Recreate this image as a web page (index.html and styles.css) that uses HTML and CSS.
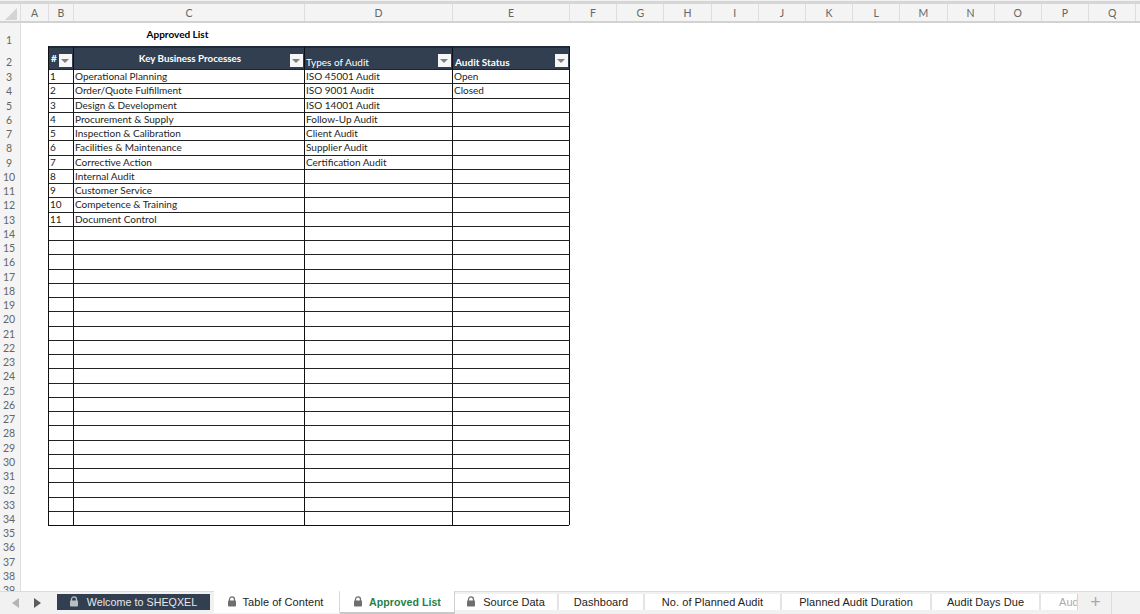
FILE: index.html
```html
<!DOCTYPE html>
<html lang="en">
<head>
<meta charset="utf-8">
<title>Approved List</title>
<link rel="stylesheet" href="styles.css">
</head>
<body>
<div class="app">
  <div class="topline"></div>
  <div class="colhead">
    <div class="corner"><svg width="20" height="19" viewBox="0 0 20 19"><path d="M17 4V16H5Z" fill="#d4d4d4"/></svg></div>
    <div class="ch w28">A</div><div class="ch w25">B</div><div class="ch w231">C</div><div class="ch w148">D</div><div class="ch w117">E</div>
    <div class="ch wn">F</div><div class="ch wn">G</div><div class="ch wn">H</div><div class="ch wn">I</div><div class="ch wn">J</div><div class="ch wn">K</div><div class="ch wn">L</div><div class="ch wn">M</div><div class="ch wn">N</div><div class="ch wn">O</div><div class="ch wn">P</div><div class="ch wn">Q</div>
  </div>
  <div class="main">
    <div class="rowhead">
      <div class="rh r1">1</div><div class="rh r2">2</div>
      <div class="rh">3</div><div class="rh">4</div><div class="rh">5</div><div class="rh">6</div><div class="rh">7</div><div class="rh">8</div><div class="rh">9</div><div class="rh">10</div><div class="rh">11</div><div class="rh">12</div><div class="rh">13</div><div class="rh">14</div><div class="rh">15</div><div class="rh">16</div><div class="rh">17</div><div class="rh">18</div><div class="rh">19</div><div class="rh">20</div><div class="rh">21</div><div class="rh">22</div><div class="rh">23</div><div class="rh">24</div><div class="rh">25</div><div class="rh">26</div><div class="rh">27</div><div class="rh">28</div><div class="rh">29</div><div class="rh">30</div><div class="rh">31</div><div class="rh">32</div><div class="rh">33</div><div class="rh">34</div><div class="rh">35</div><div class="rh">36</div><div class="rh">37</div><div class="rh">38</div><div class="rh">39</div>
    </div>
    <div class="sheet">
      <div class="title">Approved List</div>
      <div class="grid">
        <div class="hd hd-top hd-num">#<span class="fb"></span></div>
        <div class="hd hd-mid">Key Business Processes<span class="fb"></span></div>
        <div class="hd hd-low">Types of Audit<span class="fb"></span></div>
        <div class="hd hd-low hd-strong">Audit Status<span class="fb"></span></div>

        <div class="c">1</div><div class="c">Operational Planning</div><div class="c">ISO 45001 Audit</div><div class="c">Open</div>
        <div class="c">2</div><div class="c">Order/Quote Fulfillment</div><div class="c">ISO 9001 Audit</div><div class="c">Closed</div>
        <div class="c">3</div><div class="c">Design &amp; Development</div><div class="c">ISO 14001 Audit</div><div class="c"></div>
        <div class="c">4</div><div class="c">Procurement &amp; Supply</div><div class="c">Follow-Up Audit</div><div class="c"></div>
        <div class="c">5</div><div class="c">Inspection &amp; Calibration</div><div class="c">Client Audit</div><div class="c"></div>
        <div class="c">6</div><div class="c">Facilities &amp; Maintenance</div><div class="c">Supplier Audit</div><div class="c"></div>
        <div class="c">7</div><div class="c">Corrective Action</div><div class="c">Certification Audit</div><div class="c"></div>
        <div class="c">8</div><div class="c">Internal Audit</div><div class="c"></div><div class="c"></div>
        <div class="c">9</div><div class="c">Customer Service</div><div class="c"></div><div class="c"></div>
        <div class="c">10</div><div class="c">Competence &amp; Training</div><div class="c"></div><div class="c"></div>
        <div class="c">11</div><div class="c">Document Control</div><div class="c"></div><div class="c"></div>
        <div class="c"></div><div class="c"></div><div class="c"></div><div class="c"></div>
        <div class="c"></div><div class="c"></div><div class="c"></div><div class="c"></div>
        <div class="c"></div><div class="c"></div><div class="c"></div><div class="c"></div>
        <div class="c"></div><div class="c"></div><div class="c"></div><div class="c"></div>
        <div class="c"></div><div class="c"></div><div class="c"></div><div class="c"></div>
        <div class="c"></div><div class="c"></div><div class="c"></div><div class="c"></div>
        <div class="c"></div><div class="c"></div><div class="c"></div><div class="c"></div>
        <div class="c"></div><div class="c"></div><div class="c"></div><div class="c"></div>
        <div class="c"></div><div class="c"></div><div class="c"></div><div class="c"></div>
        <div class="c"></div><div class="c"></div><div class="c"></div><div class="c"></div>
        <div class="c"></div><div class="c"></div><div class="c"></div><div class="c"></div>
        <div class="c"></div><div class="c"></div><div class="c"></div><div class="c"></div>
        <div class="c"></div><div class="c"></div><div class="c"></div><div class="c"></div>
        <div class="c"></div><div class="c"></div><div class="c"></div><div class="c"></div>
        <div class="c"></div><div class="c"></div><div class="c"></div><div class="c"></div>
        <div class="c"></div><div class="c"></div><div class="c"></div><div class="c"></div>
        <div class="c"></div><div class="c"></div><div class="c"></div><div class="c"></div>
        <div class="c"></div><div class="c"></div><div class="c"></div><div class="c"></div>
        <div class="c"></div><div class="c"></div><div class="c"></div><div class="c"></div>
        <div class="c"></div><div class="c"></div><div class="c"></div><div class="c"></div>
        <div class="c"></div><div class="c"></div><div class="c"></div><div class="c"></div>
      </div>
    </div>
  </div>
  <div class="tabbar">
    <div class="arrows">
      <svg class="arrow" width="10" height="12" viewBox="0 0 10 12"><path d="M8 1V11L1 6Z" fill="#b4b4b4"/></svg>
      <svg class="arrow" width="10" height="12" viewBox="0 0 10 12"><path d="M2 1V11L9 6Z" fill="#5c5c5c"/></svg>
    </div>
    <div class="tab t-welcome"><svg class="lock" width="10" height="11" viewBox="0 0 10 11"><path d="M2.5 5V3.4a2.5 2.5 0 0 1 5 0V5" fill="none" stroke="#b9bdc4" stroke-width="1.3"/><rect x="1" y="4.6" width="8" height="6" rx=".8" fill="#b9bdc4"/></svg>Welcome to SHEQXEL</div>
    <div class="tab t-toc"><svg class="lock" width="10" height="11" viewBox="0 0 10 11"><path d="M2.5 5V3.4a2.5 2.5 0 0 1 5 0V5" fill="none" stroke="#6e6e6e" stroke-width="1.3"/><rect x="1" y="4.6" width="8" height="6" rx=".8" fill="#6e6e6e"/></svg>Table of Content</div>
    <div class="tab t-active"><svg class="lock" width="10" height="11" viewBox="0 0 10 11"><path d="M2.5 5V3.4a2.5 2.5 0 0 1 5 0V5" fill="none" stroke="#6e6e6e" stroke-width="1.3"/><rect x="1" y="4.6" width="8" height="6" rx=".8" fill="#6e6e6e"/></svg>Approved List</div>
    <div class="tab t-source"><svg class="lock" width="10" height="11" viewBox="0 0 10 11"><path d="M2.5 5V3.4a2.5 2.5 0 0 1 5 0V5" fill="none" stroke="#6e6e6e" stroke-width="1.3"/><rect x="1" y="4.6" width="8" height="6" rx=".8" fill="#6e6e6e"/></svg>Source Data</div>
    <div class="tab t-dash">Dashboard</div>
    <div class="tab t-planned">No. of Planned Audit</div>
    <div class="tab t-duration">Planned Audit Duration</div>
    <div class="tab t-days">Audit Days Due</div>
    <div class="tab t-cut">Audit</div>
    <div class="plus">+</div>
  </div>
</div>
</body>
</html>
```
FILE: styles.css
```css
* { box-sizing: border-box; }
html, body { margin: 0; padding: 0; height: 100%; background: #fff; overflow: hidden; }
.app { width: 1140px; height: 614px; display: flex; flex-direction: column; overflow: hidden; font-family: Lato, "Liberation Sans", sans-serif; }
.topline { height: 4px; flex: none; background: #d6d6d6; border-top: 1px solid #f2f2f2; }

.colhead { height: 19px; flex: none; display: flex; background: #f4f4f4; border-bottom: 2px solid #d2d2d2; }
.corner { width: 21px; flex: none; border-right: 1px solid #dedede; }
.corner svg { display: block; }
.ch { flex: none; display: flex; align-items: center; justify-content: center; font-size: 10.5px; color: #666; border-right: 1px solid #dedede; }
.w28 { width: 28px; }
.w25 { width: 25px; }
.w231 { width: 231px; }
.w148 { width: 148px; }
.w117 { width: 117px; }
.wn { width: 47.2px; }

.main { flex: 1; min-height: 0; display: flex; overflow: hidden; }
.rowhead { width: 21px; flex: none; background: #f4f4f4; border-right: 1px solid #dedede; overflow: hidden; }
.rh { height: 14.25px; display: flex; align-items: center; justify-content: center; font-size: 10.5px; color: #666; padding-right: 2px; position: relative; top: 1px; }
.rh.r1 { height: 23px; padding-top: 9px; }
.rh.r2 { height: 23px; padding-top: 7px; }

.sheet { flex: 1; padding-left: 27px; }
.title { height: 23px; width: 257px; padding-top: 3px; padding-left: 2px; text-align: center; font-size: 10px; font-weight: 700; line-height: 17px; color: #000; }
.grid { width: 521px; display: grid; grid-template-columns: 25px 231px 148px 117px; grid-template-rows: 23px; grid-auto-rows: 14.25px; border-left: 1px solid #111; border-bottom: 1px solid #111; }
.hd { position: relative; background: #323f50; color: #fff; font-size: 10px; border-top: 2px solid #1f2a38; border-right: 1px solid #0d121a; padding-left: 2px; line-height: 14px; display: flex; }
.hd-top { font-weight: 700; align-items: center; padding-bottom: 2px; }
.hd-mid { font-weight: 700; font-size: 9.8px; align-items: center; justify-content: center; padding: 0 0 2px 2px; }
.hd-low { align-items: flex-end; padding-left: 1px; }
.hd-strong { font-weight: 700; padding-left: 2px; }
.fb { position: absolute; right: 1px; bottom: 2px; width: 13px; height: 13px; background: #f6f6f6; }
.fb::after { content: ""; position: absolute; left: 2px; top: 5px; border-left: 4.5px solid transparent; border-right: 4.5px solid transparent; border-top: 4.5px solid #808080; }
.c { border-top: 1px solid #222; border-right: 1px solid #111; padding-left: 1px; font-size: 10px; line-height: 13px; color: #1e1e1e; white-space: nowrap; overflow: hidden; }

.tabbar { height: 23px; flex: none; display: flex; align-items: stretch; background: #f1f1f1; border-top: 1px solid #dcdcdc; font-family: "Liberation Sans", Arial, sans-serif; font-size: 11px; letter-spacing: .05px; color: #222; position: relative; }
.arrows { width: 57px; flex: none; display: flex; align-items: center; gap: 11px; padding-left: 11px; }
.arrow { display: block; }
.tab { flex: none; display: flex; align-items: center; justify-content: center; gap: 6px; background: #fff; margin-top: 2px; margin-bottom: 4px; white-space: nowrap; border-right: 2px solid #e4e4e4; }
.lock { display: block; flex: none; margin-top: -1px; }
.t-welcome { width: 153px; background: #323f50; color: #e6e8eb; margin-right: 4px; border-right: 0; gap: 8px; font-size: 10.7px; padding-right: 1px; }
.t-toc { width: 126px; margin-top: -1px; margin-bottom: 1px; border-right: 1px solid #d8d8d8; gap: 6px; padding-right: 3px; }
.t-active { width: 115px; margin-top: -1px; margin-bottom: 0; color: #1f8249; font-weight: 700; font-size: 10.6px; border-right: 1px solid #d0d0d0; border-bottom: 2px solid #c8c8c8; gap: 6px; }
.t-source { width: 104px; gap: 7px; padding-right: 1px; }
.t-dash { width: 86px; }
.t-planned { width: 137px; }
.t-duration { width: 150px; }
.t-days { width: 109px; }
.t-cut { width: 37px; justify-content: flex-start; padding-left: 18px; color: #aaa; overflow: hidden; border-right: 1px solid #d6d6d6; }
.plus { width: 34px; flex: none; display: flex; align-items: center; justify-content: center; font-size: 18px; color: #a8a8a8; border-right: 1px solid #dcdcdc; padding: 0 0 2px 2px; }
```
